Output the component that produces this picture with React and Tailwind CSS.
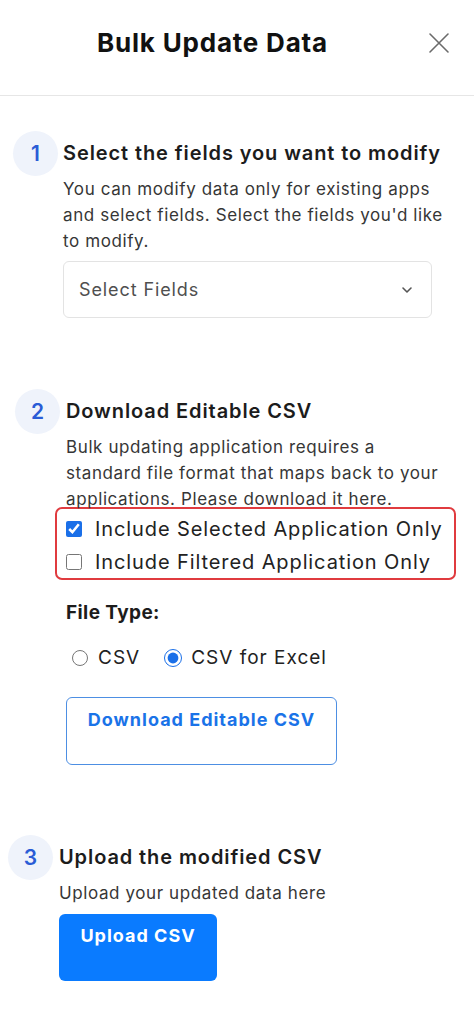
const font = { fontFamily: 'Inter, "Liberation Sans", sans-serif' }

function StepCircle({ n }) {
  return (
    <div className="w-[45px] h-[45px] shrink-0 rounded-full bg-[#eff3fb] flex items-center justify-center text-[21px] font-semibold text-[#2a5cd6]">
      {n}
    </div>
  )
}

export default function App() {
  return (
    <div className="w-[474px] h-[1010px] bg-white overflow-hidden" style={font}>
      {/* header */}
      <div className="h-[96px] border-b border-[#e6e6e6] flex items-center pl-[97px] pr-[24px] justify-between">
        <h1 className="text-[26px] font-bold text-[#111] tracking-[0.8px] -mt-[10px]">Bulk Update Data</h1>
        <svg className="-mt-[10px]" width="22" height="22" viewBox="0 0 22 22" fill="none" stroke="#6b6b6b" strokeWidth="1.6" strokeLinecap="round">
          <path d="M2 2 L20 20 M20 2 L2 20" />
        </svg>
      </div>

      {/* step 1 */}
      <div className="flex items-start gap-[5px] pl-[13px] mt-[35px]">
        <StepCircle n="1" />
        <div className="w-[385px]">
          <h2 className="text-[20px] leading-[45px] font-semibold text-[#1c1c1c] tracking-[0.9px] whitespace-nowrap">
            Select the fields you want to modify
          </h2>
          <p className="text-[17px] leading-[26px] text-[#363636] tracking-[0.6px]">
            You can modify data only for existing apps and select fields. Select the fields you'd like to modify.
          </p>
          <button className="mt-[7px] w-[369px] h-[57px] rounded-[6px] border border-[#e3e3e3] flex items-center justify-between pl-[15px] pr-[18px] text-[18px] tracking-[0.9px] text-[#4f4f4f]">
            <span>Select Fields</span>
            <svg width="12" height="8" viewBox="0 0 12 8" fill="none" stroke="#555" strokeWidth="1.6" strokeLinecap="round" strokeLinejoin="round">
              <path d="M2 2 L6 6 L10 2" />
            </svg>
          </button>
        </div>
      </div>

      {/* step 2 */}
      <div className="flex items-start gap-[6px] pl-[15px] mt-[71px]">
        <StepCircle n="2" />
        <div className="w-[390px]">
          <h2 className="text-[20px] leading-[45px] font-semibold text-[#1c1c1c] tracking-[0.9px]">
            Download Editable CSV
          </h2>
          <p className="text-[17px] leading-[26px] text-[#363636] tracking-[0.6px] w-[385px]">
            Bulk updating application requires a standard file format that maps back to your applications. Please download it here.
          </p>
          <div className="-mt-[5px] -ml-[11px] w-[401px] h-[73px] border-2 border-[#e03b3f] rounded-[7px] pl-[9px] pt-[3px]">
            <label className="h-[33px] flex items-center gap-[13px] text-[20px] tracking-[0.9px] text-[#222] whitespace-nowrap">
              <input type="checkbox" defaultChecked className="w-4 h-4 accent-[#1a6fe8]" />
              <span>Include Selected Application Only</span>
            </label>
            <label className="h-[33px] flex items-center gap-[13px] text-[20px] tracking-[0.9px] text-[#222] whitespace-nowrap">
              <input type="checkbox" className="w-4 h-4" />
              <span>Include Filtered Application Only</span>
            </label>
          </div>
          <p className="mt-[20px] text-[19px] leading-[26px] font-bold text-[#1c1c1c] tracking-[0.4px]">File Type:</p>
          <div className="mt-[19px] h-[26px] flex items-center pl-[6px] text-[19px] tracking-[1px] text-[#222]">
            <label className="flex items-center gap-[10px]">
              <input type="radio" name="ft" className="w-4 h-4" />
              <span>CSV</span>
            </label>
            <label className="flex items-center gap-[9px] ml-[24px]">
              <input type="radio" name="ft" defaultChecked className="w-[18px] h-[18px] accent-[#1a6fe8]" />
              <span>CSV for Excel</span>
            </label>
          </div>
          <button className="mt-[26px] w-[271px] h-[68px] rounded-[6px] border-[1.5px] border-[#4d8fe3] flex justify-center pt-[8px] text-[18px] tracking-[1px] font-bold text-[#1a73e8]">
            Download Editable CSV
          </button>
        </div>
      </div>

      {/* step 3 */}
      <div className="flex items-start gap-[6px] pl-[8px] mt-[70px]">
        <StepCircle n="3" />
        <div>
          <h2 className="text-[20px] leading-[45px] font-semibold text-[#1c1c1c] tracking-[0.9px]">
            Upload the modified CSV
          </h2>
          <p className="text-[17px] leading-[26px] text-[#363636] tracking-[0.6px]">Upload your updated data here</p>
          <button className="mt-[8px] w-[158px] h-[67px] rounded-[6px] bg-[#0a7bff] flex justify-center pt-[8px] text-[18px] tracking-[1px] font-bold text-white">
            Upload CSV
          </button>
        </div>
      </div>
    </div>
  )
}
